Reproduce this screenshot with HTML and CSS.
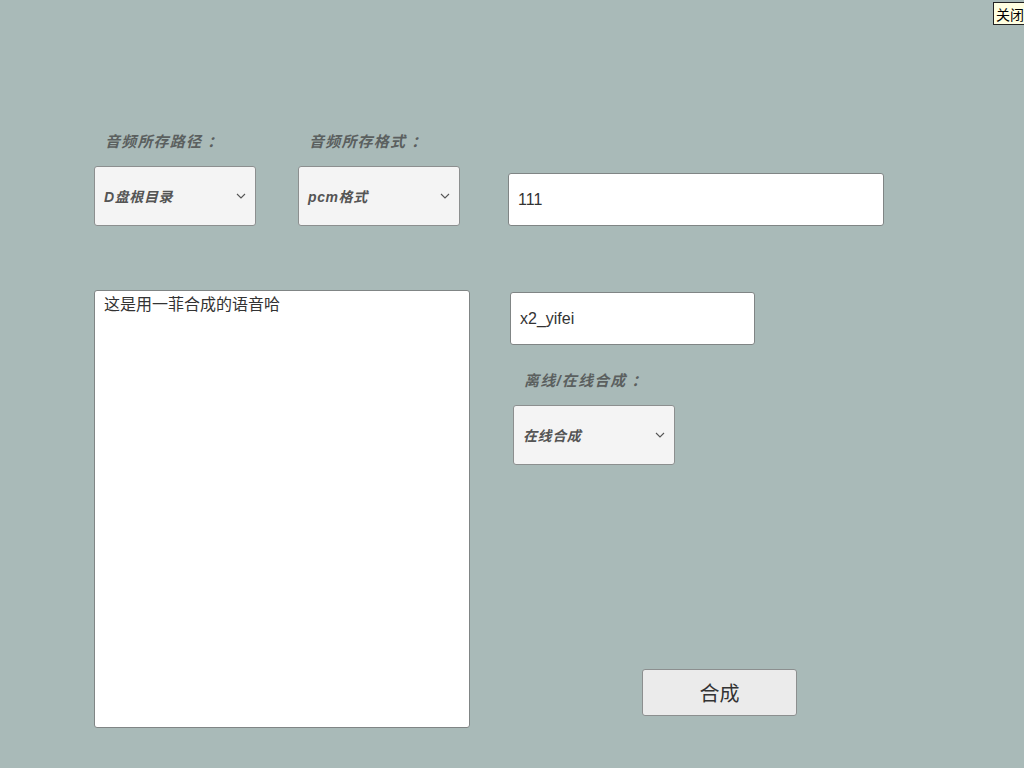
FILE: index.html
```html
<!DOCTYPE html>
<html lang="zh">
<head>
<meta charset="utf-8">
<title>语音合成</title>
<link rel="stylesheet" href="styles.css">
</head>
<body>
<button class="close-btn">关闭</button>
<div class="page">
  <div class="top-row">
    <div class="field">
      <div class="label">音频所存路径<span class="colon">：</span></div>
      <div class="select"><span>D盘根目录</span><svg class="chev" viewBox="0 0 10 6" width="10" height="6"><path d="M1 1l4 4 4-4" fill="none" stroke="#555" stroke-width="1.1"/></svg></div>
    </div>
    <div class="field field-2">
      <div class="label">音频所存格式<span class="colon">：</span></div>
      <div class="select"><span>pcm格式</span><svg class="chev" viewBox="0 0 10 6" width="10" height="6"><path d="M1 1l4 4 4-4" fill="none" stroke="#555" stroke-width="1.1"/></svg></div>
    </div>
    <div class="input input-wide">111</div>
  </div>
  <div class="bottom-row">
    <div class="textarea">这是用一菲合成的语音哈</div>
    <div class="right-col">
      <div class="input input-voice">x2_yifei</div>
      <div class="field field-3">
        <div class="label">离线/在线合成<span class="colon">：</span></div>
        <div class="select"><span>在线合成</span><svg class="chev" viewBox="0 0 10 6" width="10" height="6"><path d="M1 1l4 4 4-4" fill="none" stroke="#555" stroke-width="1.1"/></svg></div>
      </div>
      <button class="synth-btn">合成</button>
    </div>
  </div>
</div>
</body>
</html>
```
FILE: styles.css
```css
html, body {
  margin: 0;
  padding: 0;
  background: #a9bab8;
  width: 1024px;
  height: 768px;
  overflow: hidden;
  font-family: "Liberation Sans", "Noto Sans CJK SC", sans-serif;
}
.close-btn {
  position: absolute;
  top: 2px;
  left: 993px;
  height: 23px;
  padding: 0 2px;
  margin: 0;
  border: 1px solid #222;
  background: #ffffe1;
  font-family: "Noto Sans CJK SC", sans-serif;
  font-size: 14px;
  line-height: 20px;
  color: #000;
  white-space: nowrap;
  width: 40px;
  text-align: left;
}
.page {
  padding-left: 94px;
  padding-top: 132px;
}
.top-row {
  display: flex;
  align-items: flex-start;
}
.field {
  display: flex;
  flex-direction: column;
  width: 162px;
}
.field-2 {
  margin-left: 42px;
}
.label {
  padding-left: 11px;
  height: 20px;
  line-height: 20px;
  font-size: 15px;
  letter-spacing: 1.2px;
  font-style: italic;
  font-weight: bold;
  color: #5b605f;
  margin-bottom: 14px;
  white-space: nowrap;
}
.colon {
  margin-left: 5px;
}
.select {
  box-sizing: border-box;
  height: 60px;
  width: 162px;
  background: #f4f4f4;
  border: 1px solid #8c8f8f;
  border-radius: 3px;
  display: flex;
  align-items: center;
  justify-content: space-between;
  padding: 0 9px 0 9px;
  font-size: 14px;
  letter-spacing: 0.6px;
  font-style: italic;
  font-weight: bold;
  color: #555;
}
.input {
  box-sizing: border-box;
  background: #fff;
  border: 1px solid #808585;
  border-radius: 3px;
  display: flex;
  align-items: center;
  padding-left: 9px;
  font-size: 16px;
  color: #333;
}
.input-wide {
  margin-left: 48px;
  margin-top: 41px;
  width: 376px;
  height: 53px;
}
.bottom-row {
  display: flex;
  align-items: flex-start;
  margin-top: 64px;
}
.textarea {
  box-sizing: border-box;
  width: 376px;
  height: 438px;
  background: #fff;
  border: 1px solid #808585;
  border-radius: 3px;
  padding: 0 9px;
  font-family: "Noto Sans CJK SC", sans-serif;
  font-size: 16px;
  line-height: 24px;
  color: #333;
}
.right-col {
  margin-left: 40px;
  display: flex;
  flex-direction: column;
  align-items: flex-start;
}
.input-voice {
  margin-top: 2px;
  width: 245px;
  height: 53px;
}
.field-3 {
  margin-top: 26px;
  margin-left: 3px;
}
.synth-btn {
  margin-top: 204px;
  margin-left: 132px;
  width: 155px;
  height: 47px;
  background: #ebebeb;
  border: 1px solid #8c8f8f;
  border-radius: 3px;
  font-family: "Noto Sans CJK SC", sans-serif;
  font-size: 20px;
  color: #333;
  padding: 0;
}
```
